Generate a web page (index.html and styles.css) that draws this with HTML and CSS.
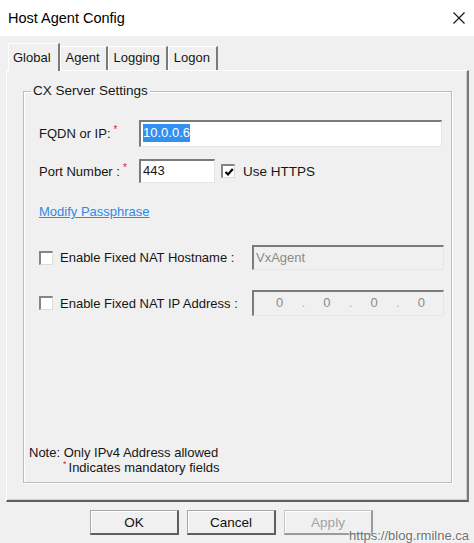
FILE: index.html
```html
<!DOCTYPE html>
<html lang="en">
<head>
  <meta charset="UTF-8" />
  <meta name="viewport" content="width=device-width, initial-scale=1.0" />
  <title>Host Agent Config</title>
  <link rel="stylesheet" href="styles.css">
</head>
<body>
  <div class="dialog">
    <div class="titlebar">
      <span class="title">Host Agent Config</span>
      <svg class="close" viewBox="0 0 12 12" width="12" height="12">
        <path d="M0.5 0.5 L11.5 11.5 M11.5 0.5 L0.5 11.5" stroke="#111" stroke-width="1.1" fill="none" />
      </svg>
    </div>

    <div class="tabs">
      <div class="tab active">Global</div>
      <div class="tab">Agent</div>
      <div class="tab">Logging</div>
      <div class="tab">Logon</div>
    </div>

    <div class="panel">
      <fieldset class="group">
        <legend>CX Server Settings</legend>

        <div class="row row-fqdn">
          <span class="label">FQDN or IP:<sup class="req">*</sup></span>
          <div class="field field-fqdn"><span class="sel">10.0.0.6</span></div>
        </div>

        <div class="row row-port">
          <span class="label">Port Number :<sup class="req">*</sup></span>
          <div class="field field-port">443</div>
          <span class="check checked">
            <svg viewBox="0 0 10 10" width="10" height="10">
              <path d="M1.5 5 L4 7.5 L8.8 2" stroke="#000" stroke-width="2.2" fill="none" />
            </svg>
          </span>
          <span class="check-text">Use HTTPS</span>
        </div>

        <a class="link" href="#">Modify Passphrase</a>

        <div class="row row-nat1">
          <span class="check"></span>
          <span class="nat-label">Enable Fixed NAT Hostname :</span>
          <div class="field field-off">VxAgent</div>
        </div>

        <div class="row row-nat2">
          <span class="check"></span>
          <span class="nat-label">Enable Fixed NAT IP Address :</span>
          <div class="field field-off field-ip">
            <span>0</span><span class="dot">.</span>
            <span>0</span><span class="dot">.</span>
            <span>0</span><span class="dot">.</span>
            <span>0</span>
          </div>
        </div>

        <div class="note">
          <p>Note: Only IPv4 Address allowed</p>
          <p class="note-req"><span class="req-mark">*</span>Indicates mandatory fields</p>
        </div>
      </fieldset>
    </div>

    <div class="buttons">
      <button class="btn">OK</button>
      <button class="btn">Cancel</button>
      <button class="btn" disabled>Apply</button>
    </div>

    <div class="watermark">https://blog.rmilne.ca</div>
  </div>
</body>
</html>
```

FILE: styles.css
```css
:root {
  --face: #f0f0f0;
  --shadow: #7a7a7a;
  --dark: #5e5e5e;
  --font: "Liberation Sans", Arial, sans-serif;
}

* {
  box-sizing: border-box;
}

body {
  margin: 0;
  background: var(--face);
  font-family: var(--font);
  font-size: 13px;
  color: #161616;
}

.dialog {
  position: relative;
  width: 474px;
  height: 543px;
  overflow: hidden;
}

.titlebar {
  height: 36px;
  background: #fff;
  display: flex;
  align-items: center;
  justify-content: space-between;
  padding: 0 9px 0 8px;
}

.title {
  font-size: 14.5px;
  color: #000;
}

/* tabs */
.tabs {
  display: flex;
  align-items: flex-end;
  height: 27px;
  margin-top: 7px;
  padding-left: 8px;
  position: relative;
  z-index: 1;
}

.tab {
  height: 24px;
  line-height: 22px;
  padding: 0 6px 0 5px;
  border-top: 1px solid #fff;
  border-left: 1px solid #fff;
  border-right: 2px solid var(--shadow);
  background: var(--face);
}

.tab.active {
  height: 28px;
  line-height: 27px;
  margin-bottom: -1px;
  padding: 0 7px 0 4px;
}

.panel {
  width: 463px;
  height: 432px;
  margin-left: 6px;
  border-top: 1px solid #fff;
  border-left: 1px solid #fff;
  border-right: 2px solid var(--shadow);
  border-bottom: 2px solid var(--dark);
  box-shadow: inset -1px -1px 0 #d0d0d0;
  padding: 12px 0 0 16px;
}

/* group box */
.group {
  margin: 0;
  width: 429px;
  height: 400px;
  border: 1px solid #bcbcbc;
  box-shadow: inset 1px 1px 0 #fff, 1px 1px 0 #fff;
  padding: 21px 0 0 15px;
}

.group legend {
  margin-left: -8px;
  padding: 0 2px;
  line-height: 16px;
  font-size: 13.5px;
}

.row {
  display: flex;
  align-items: center;
}

.label {
  width: 100px;
}

.req {
  color: #e02020;
  font-size: 10px;
  vertical-align: 5px;
  margin-left: 3px;
  line-height: 0;
}

.field {
  background: #fff;
  border-top: 2px solid #7b7b7b;
  border-left: 2px solid #7b7b7b;
  border-right: 1px solid #e6e6e6;
  border-bottom: 1px solid #e6e6e6;
  padding-left: 2px;
}

.row-fqdn {
  height: 27px;
}

.field-fqdn {
  width: 303px;
  height: 27px;
  padding-top: 2px;
}

.sel {
  display: inline-block;
  background: #3390f0;
  color: #fff;
  height: 18px;
  line-height: 18px;
}

.row-port {
  height: 24px;
  margin-top: 12px;
}

.field-port {
  width: 76px;
  height: 24px;
  line-height: 20px;
}

.check {
  width: 14px;
  height: 14px;
  flex-shrink: 0;
  background: #fff;
  border-top: 2px solid #858585;
  border-left: 2px solid #858585;
  border-right: 1px solid #dcdcdc;
  border-bottom: 1px solid #dcdcdc;
  display: flex;
  align-items: center;
  justify-content: center;
}

.row-port .check {
  margin-left: 6px;
}

.check-text {
  margin-left: 8px;
  font-size: 13.5px;
}

.link {
  display: block;
  width: max-content;
  margin-top: 21px;
  line-height: 16px;
  color: #2e8ae6;
}

.row-nat1 {
  height: 25px;
  margin-top: 25px;
}

.row-nat2 {
  height: 26px;
  margin-top: 20px;
}

.nat-label {
  width: 192px;
  margin-left: 7px;
}

.field-off {
  width: 192px;
  height: 100%;
  background: var(--face);
  color: #8a8a8a;
  line-height: 22px;
}

.field-ip {
  display: flex;
  justify-content: space-between;
  padding: 0 18px 0 22px;
}

.field-ip .dot {
  color: #b0b0b0;
}

.note {
  margin: 129px 0 0 -10px;
  line-height: 15px;
}

.note p {
  margin: 0;
}

.note-req {
  padding-left: 34px;
}

.req-mark {
  display: inline-block;
  color: #e02020;
  font-size: 9px;
  line-height: 9px;
  vertical-align: top;
  margin-right: 2px;
}

/* dialog buttons */
.buttons {
  display: flex;
  gap: 8px;
  padding-left: 90px;
  margin-top: 8px;
}

.btn {
  width: 89px;
  height: 25px;
  font-family: var(--font);
  font-size: 13.5px;
  color: #111;
  background: var(--face);
  border-top: 1px solid #a8a8a8;
  border-left: 1px solid #a8a8a8;
  border-right: 2px solid var(--dark);
  border-bottom: 2px solid var(--dark);
  box-shadow: inset 1px 1px 0 #fff;
  padding: 0;
}

.btn:disabled {
  color: #a3a3a3;
  border-color: #c4c4c4 #9a9a9a #9a9a9a #c4c4c4;
}

.watermark {
  position: absolute;
  right: 5px;
  bottom: 0;
  line-height: 15px;
  font-size: 13px;
  color: #6f6f6f;
  text-shadow: 0 0 2px #fff, 0 0 2px #fff;
}
```
